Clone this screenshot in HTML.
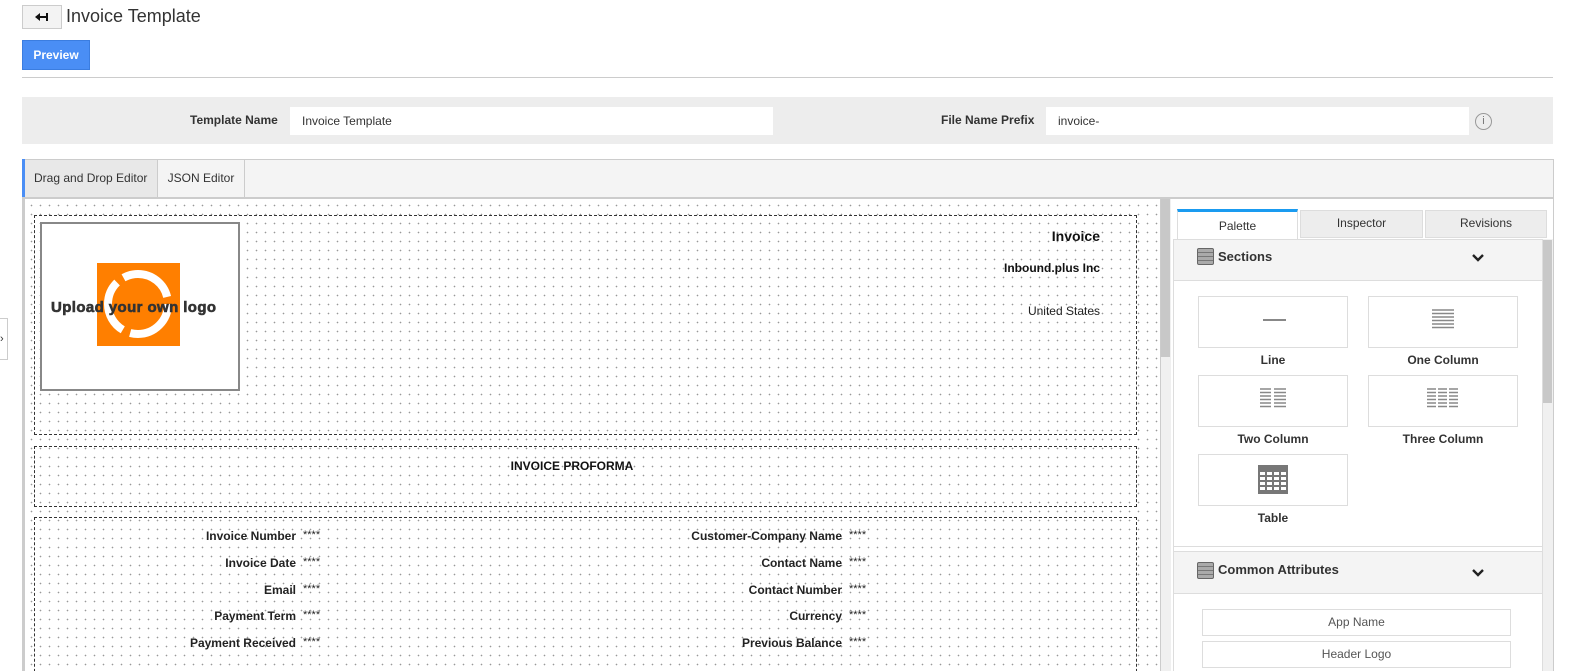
<!DOCTYPE html>
<html><head><meta charset="utf-8"><style>
*{box-sizing:border-box;margin:0;padding:0}
html,body{width:1575px;height:671px;overflow:hidden}
body{background:#fff;font-family:"Liberation Sans",Arial,sans-serif;color:#222;position:relative}
.a{position:absolute}
.dots{background-color:#fff;background-image:radial-gradient(circle,#999 0.7px,transparent 0.9px);background-size:9px 9px;background-position:2px 2px}
.dash{border:1px dashed #333}
.lbl{font-size:12px;font-weight:bold;text-align:right;width:200px}
.val{font-size:11px}
.card{position:absolute;width:150px;height:52px;border:1px solid #ddd;background:#fff}
.clab{position:absolute;width:150px;text-align:center;font-size:12px;font-weight:bold;color:#333}
.bar{position:absolute;background:#888;height:2px}
</style></head><body>
<div class="a" style="left:22px;top:5px;width:40px;height:24px;border:1px solid #ccc;background:#f3f3f3"><svg width="40" height="24" style="position:absolute;left:-1px;top:-1px"><path d="M16 12H25M25 8V16" stroke="#111" stroke-width="2" fill="none"/><path d="M13 12l5-4v8z" fill="#111"/></svg></div>
<div class="a" style="left:66px;top:6px;font-size:18px;color:#333">Invoice Template</div>
<div class="a" style="left:22px;top:40px;width:68px;height:30px;background:#4a8ef5;border:1px solid #3b7de0;color:#fff;font-size:12px;font-weight:bold;text-align:center;line-height:28px">Preview</div>
<div class="a" style="left:22px;top:77px;width:1531px;height:1px;background:#ccc"></div>
<div class="a" style="left:22px;top:97px;width:1531px;height:47px;background:#ededed"></div>
<div class="a" style="left:190px;top:113px;font-size:12px;font-weight:bold;color:#333">Template Name</div>
<div class="a" style="left:290px;top:107px;width:483px;height:28px;background:#fff;font-size:12px;line-height:28px;padding-left:12px;color:#333">Invoice Template</div>
<div class="a" style="left:941px;top:113px;font-size:12px;font-weight:bold;color:#333">File Name Prefix</div>
<div class="a" style="left:1046px;top:107px;width:423px;height:28px;background:#fff;font-size:12px;line-height:28px;padding-left:12px;color:#333">invoice-</div>
<div class="a" style="left:1475px;top:113px;width:17px;height:17px;border:1px solid #999;border-radius:50%;font-size:11px;text-align:center;line-height:15px;color:#777">i</div>
<!-- editor -->
<div class="a" style="left:22px;top:159px;width:1532px;height:512px;border:1px solid #ccc;border-bottom:none;background:#f4f4f4"></div>
<div class="a" style="left:22px;top:159px;width:3px;height:38px;background:#4a8ef5"></div>
<div class="a" style="left:25px;top:160px;width:133px;height:37px;background:#e8e8e8;border-right:1px solid #ccc;font-size:12px;line-height:36px;padding-left:9px;color:#333">Drag and Drop Editor</div>
<div class="a" style="left:158px;top:160px;width:87px;height:37px;border-right:1px solid #ccc;font-size:12px;line-height:36px;text-align:center;color:#333">JSON Editor</div>
<div class="a" style="left:22px;top:197px;width:1532px;height:2px;background:#ccc"></div>
<div class="a dots" style="left:23px;top:199px;width:1137px;height:472px;border-left:2px solid #ccc"></div>
<div class="a" style="left:1160px;top:199px;width:11px;height:472px;background:#f0f0f0;border-left:1px solid #ccc"></div>
<div class="a" style="left:1161px;top:199px;width:9px;height:158px;background:#c8c8c8"></div>
<div class="a" style="left:0;top:318px;width:8px;height:42px;border:1px solid #ccc;border-left:none;background:#fff;font-size:11px;line-height:40px;color:#333">&#8250;</div>
<!-- section 1 -->
<div class="a dash" style="left:34px;top:215px;width:1103px;height:220px"></div>
<div class="a" style="left:40px;top:222px;width:200px;height:169px;border:2px solid #888;background:#fff">
<div class="a" style="left:55px;top:39px;width:83px;height:83px;background:#ff7f00;overflow:hidden">
<svg width="83" height="83"><circle cx="41" cy="41" r="30" fill="none" stroke="#fff" stroke-width="8" stroke-dasharray="55 8"/></svg></div>
<div class="a" style="left:9px;top:75px;font-size:15px;font-weight:bold;color:#333;white-space:nowrap;letter-spacing:0.4px;-webkit-text-stroke:0.6px #333">Upload your own logo</div>
</div>
<div class="a" style="left:1000px;top:228px;width:100px;text-align:right;font-size:14px;font-weight:bold;color:#111">Invoice</div>
<div class="a" style="left:950px;top:261px;width:150px;text-align:right;font-size:12px;font-weight:bold;color:#111">Inbound.plus Inc</div>
<div class="a" style="left:950px;top:304px;width:150px;text-align:right;font-size:12px;color:#222">United States</div>
<!-- section 2 -->
<div class="a dash" style="left:34px;top:446px;width:1103px;height:61px"></div>
<div class="a" style="left:472px;top:459px;width:200px;text-align:center;font-size:12px;font-weight:bold;color:#111">INVOICE PROFORMA</div>
<!-- section 3 -->
<div class="a dash" style="left:34px;top:517px;width:1103px;height:170px"></div>
<div class="a lbl" style="left:96px;top:529px">Invoice Number</div><div class="a val" style="left:303px;top:529px">****</div>
<div class="a lbl" style="left:96px;top:556px">Invoice Date</div><div class="a val" style="left:303px;top:556px">****</div>
<div class="a lbl" style="left:96px;top:583px">Email</div><div class="a val" style="left:303px;top:583px">****</div>
<div class="a lbl" style="left:96px;top:609px">Payment Term</div><div class="a val" style="left:303px;top:609px">****</div>
<div class="a lbl" style="left:96px;top:636px">Payment Received</div><div class="a val" style="left:303px;top:636px">****</div>
<div class="a lbl" style="left:642px;top:529px">Customer-Company Name</div><div class="a val" style="left:849px;top:529px">****</div>
<div class="a lbl" style="left:642px;top:556px">Contact Name</div><div class="a val" style="left:849px;top:556px">****</div>
<div class="a lbl" style="left:642px;top:583px">Contact Number</div><div class="a val" style="left:849px;top:583px">****</div>
<div class="a lbl" style="left:642px;top:609px">Currency</div><div class="a val" style="left:849px;top:609px">****</div>
<div class="a lbl" style="left:642px;top:636px">Previous Balance</div><div class="a val" style="left:849px;top:636px">****</div>
<!-- right panel -->
<div class="a" style="left:1171px;top:199px;width:382px;height:472px;background:#fff"></div>
<div class="a" style="left:1177px;top:209px;width:121px;height:30px;background:#fff;border:1px solid #ddd;border-top:3px solid #1a9bf0;border-bottom:none;font-size:12px;text-align:center;line-height:28px;color:#333">Palette</div>
<div class="a" style="left:1300px;top:210px;width:123px;height:28px;background:#ededed;border:1px solid #ddd;font-size:12px;text-align:center;line-height:25px;color:#333">Inspector</div>
<div class="a" style="left:1425px;top:210px;width:122px;height:28px;background:#ededed;border:1px solid #ddd;font-size:12px;text-align:center;line-height:25px;color:#333">Revisions</div>
<div class="a" style="left:1173px;top:239px;width:370px;height:432px;border:1px solid #ddd;border-bottom:none"></div>
<div class="a" style="left:1543px;top:239px;width:10px;height:432px;background:#f0f0f0"></div>
<div class="a" style="left:1543px;top:240px;width:9px;height:163px;background:#c8c8c8"></div>
<div class="a" style="left:1174px;top:240px;width:368px;height:41px;background:#f4f4f4;border-bottom:1px solid #ddd"></div>
<div class="a" style="left:1197px;top:248px;width:17px;height:17px;border:1px solid #666;border-radius:2px;background:repeating-linear-gradient(#aaa 0 3px,#777 3px 4px)"></div>
<div class="a" style="left:1218px;top:249px;font-size:13px;font-weight:bold;color:#333">Sections</div>
<svg class="a" style="left:1471px;top:253px" width="14" height="10"><path d="M2 2l5 5 5-5" stroke="#222" stroke-width="2.4" fill="none"/></svg>
<div class="card" style="left:1198px;top:296px"><div class="bar" style="left:64px;top:22px;width:23px"></div></div>
<div class="card" style="left:1368px;top:296px">
<svg class="a" style="left:63px;top:12px" width="23" height="22"><g stroke="#888" stroke-width="1.6"><path d="M0 1H22M0 4.5H22M0 8H22M0 11.5H22M0 15H22M0 18.5H22"/></g></svg></div>
<div class="clab" style="left:1198px;top:353px">Line</div>
<div class="clab" style="left:1368px;top:353px">One Column</div>
<div class="card" style="left:1198px;top:375px">
<svg class="a" style="left:61px;top:12px" width="27" height="22"><g stroke="#888" stroke-width="1.6"><path d="M0 1H11M0 4.5H11M0 8H11M0 11.5H11M0 15H11M0 18.5H11M14 1H26M14 4.5H26M14 8H26M14 11.5H26M14 15H26M14 18.5H26"/></g></svg></div>
<div class="card" style="left:1368px;top:375px">
<svg class="a" style="left:58px;top:12px" width="32" height="22"><g stroke="#888" stroke-width="1.6"><path d="M0 1H9M0 4.5H9M0 8H9M0 11.5H9M0 15H9M0 18.5H9M11 1H20M11 4.5H20M11 8H20M11 11.5H20M11 15H20M11 18.5H20M22 1H31M22 4.5H31M22 8H31M22 11.5H31M22 15H31M22 18.5H31"/></g></svg></div>
<div class="clab" style="left:1198px;top:432px">Two Column</div>
<div class="clab" style="left:1368px;top:432px">Three Column</div>
<div class="card" style="left:1198px;top:454px">
<svg class="a" style="left:59px;top:10px" width="30" height="29"><rect width="30" height="29" fill="#777"/><g fill="#fff"><rect x="2" y="7" width="5" height="3"/><rect x="9" y="7" width="5" height="3"/><rect x="16" y="7" width="5" height="3"/><rect x="23" y="7" width="5" height="3"/><rect x="2" y="12" width="5" height="3"/><rect x="9" y="12" width="5" height="3"/><rect x="16" y="12" width="5" height="3"/><rect x="23" y="12" width="5" height="3"/><rect x="2" y="17" width="5" height="3"/><rect x="9" y="17" width="5" height="3"/><rect x="16" y="17" width="5" height="3"/><rect x="23" y="17" width="5" height="3"/><rect x="2" y="22" width="5" height="3"/><rect x="9" y="22" width="5" height="3"/><rect x="16" y="22" width="5" height="3"/><rect x="23" y="22" width="5" height="3"/></g></svg></div>
<div class="clab" style="left:1198px;top:511px">Table</div>
<div class="a" style="left:1174px;top:546px;width:368px;height:6px;border-top:1px solid #ddd;border-bottom:1px solid #ddd;background:#fff"></div>
<div class="a" style="left:1174px;top:552px;width:368px;height:42px;background:#f4f4f4;border-bottom:1px solid #ddd"></div>
<div class="a" style="left:1197px;top:562px;width:17px;height:17px;border:1px solid #666;border-radius:2px;background:repeating-linear-gradient(#aaa 0 3px,#777 3px 4px)"></div>
<div class="a" style="left:1218px;top:562px;font-size:13px;font-weight:bold;color:#333">Common Attributes</div>
<svg class="a" style="left:1471px;top:568px" width="14" height="10"><path d="M2 2l5 5 5-5" stroke="#222" stroke-width="2.4" fill="none"/></svg>
<div class="a" style="left:1202px;top:609px;width:309px;height:27px;border:1px solid #ddd;font-size:12px;text-align:center;line-height:25px;color:#555">App Name</div>
<div class="a" style="left:1202px;top:641px;width:309px;height:27px;border:1px solid #ddd;font-size:12px;text-align:center;line-height:25px;color:#555">Header Logo</div>
</body></html>
